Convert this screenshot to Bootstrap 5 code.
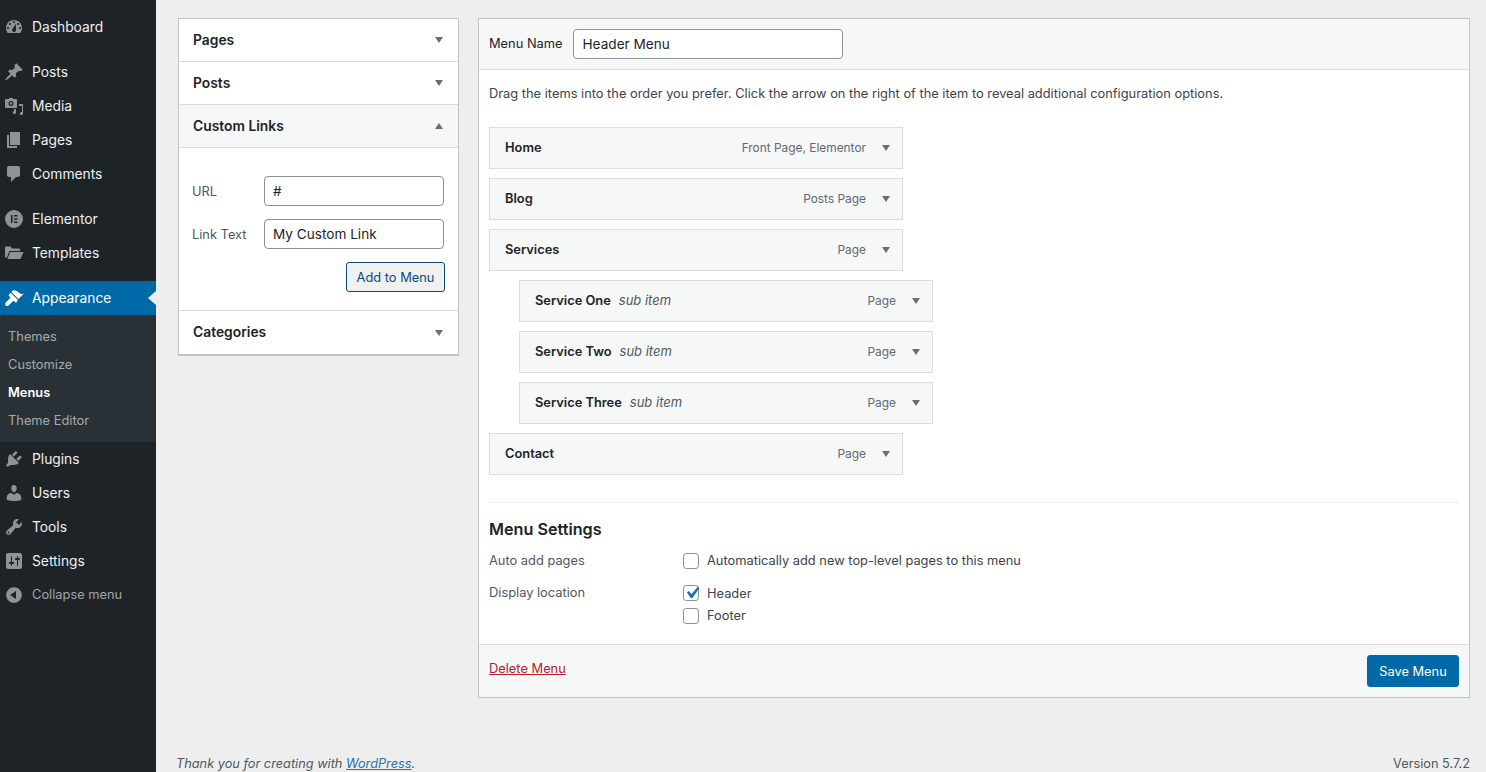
<!DOCTYPE html>
<html lang="en">
<head>
<meta charset="utf-8">
<title>Menus</title>
<link href="https://cdn.jsdelivr.net/npm/bootstrap@5.3.0/dist/css/bootstrap.min.css" rel="stylesheet">
<style>
html,body{height:100%;}
body{background:#eeeeee;font-family:Inter,"Liberation Sans",sans-serif;font-size:12.85px;color:#1d2327;overflow:hidden;}
.wp-shell{height:772px;}
.wp-side{width:156px;flex:none;background:#1d2327;padding-top:10px;}
.side-link{height:34px;padding-left:4px;color:#f0f0f1;font-size:13.8px;gap:8px;position:relative;}
.side-link svg{width:20px;height:20px;fill:#8f9297;flex:none;}
.side-gap{margin-top:11px;}
.side-link.on{background:#006aa8;color:#fff;}
.side-link.on svg{fill:#fff;}
.side-link.on::after{content:"";position:absolute;right:0;top:10px;border-top:7px solid transparent;border-bottom:7px solid transparent;border-right:8px solid #eeeeee;}
.side-sub{background:#2a3136;padding:7px 0 8px;}
.side-sub div{height:28px;line-height:28px;padding-left:8px;padding-top:1px;color:#a7aaad;font-size:12.85px;}
.side-sub .cur{color:#fff;font-weight:600;}
.side-collapse{height:32px;padding-top:2px;color:#a2a5a8;font-size:12.85px;}
.wp-main{flex:1;min-width:0;padding:18px 16px 0 22px;position:relative;}
.left-panel{width:281px;flex:none;background:#fff;border:1px solid #c3c4c7;border-bottom-width:2px;align-self:flex-start;margin-right:19px;}
.acc-head{height:43px;padding:0 15px 0 14px;font-size:13.85px;font-weight:600;border-bottom:1px solid #dcdcde;}
.acc-head.last{border-bottom:0;height:43px;}
.acc-head.open{background:#f6f7f7;}
.tri{width:0;height:0;border-left:4px solid transparent;border-right:4px solid transparent;border-top:6px solid #6a6f74;flex:none;}
.tri.up{border-top:0;border-bottom:6px solid #6a6f74;}
.acc-body{padding:28px 14px 14px 13px;border-bottom:1px solid #dcdcde;height:163px;}
.fld-label{width:72px;color:#50575e;flex:none;padding-top:2px;}
.fld-row{margin-bottom:13px;}
.wp-input{height:30px;width:180px;border:1px solid #8c8f94;border-radius:4px;padding:0 8px;font-size:13.6px;color:#1d2327;box-shadow:none;}
.btn-add{height:30px;width:99px;margin-left:auto;margin-right:-1px;display:block;padding:1px 0 0;background:#f0f0f1;border:1px solid #0a4b78;border-radius:3px;color:#0a4b78;font-size:12.85px;}
.right-panel{width:992px;height:680px;background:#fff;border:1px solid #c3c4c7;flex:none;}
.rp-head{height:51px;background:#f6f7f7;border-bottom:1px solid #dcdcde;padding:0 10px;gap:10px;}
.rp-head .wp-input{width:270px;padding-left:9px;}
.rp-body{padding:0 10px;height:574px;flex:none;}
.hint{padding-top:16px;height:57px;margin:0;color:#3c434a;line-height:16px;}
.menu-item-row{width:414px;height:42px;background:#f6f7f7;border:1px solid #dcdcde;margin-bottom:9px;padding:0 12px 0 15px;}
.menu-item-row.sub{margin-left:30px;}
.mi-name{font-weight:600;}
.mi-sub{font-style:italic;color:#50575e;margin-left:8px;font-size:13px;}
.mi-type{margin-left:auto;margin-right:16px;font-size:11.9px;color:#646970;}
.settings{border-top:1px solid #f0f0f1;margin-top:27px;padding-top:15px;}
.settings h3{font-size:16.2px;font-weight:600;margin:0 0 13px;line-height:22px;}
.set-label{width:194px;color:#50575e;flex:none;line-height:16px;}
.chk{width:16px;height:16px;margin:0 8px 0 0;border:1px solid #8c8f94;border-radius:4px;flex:none;}
.chk:checked{background-color:#fff;border-color:#8c8f94;background-image:none;}
.chk-wrap{position:relative;flex:none;width:24px;height:16px;}
.chk-wrap svg{position:absolute;left:-3px;top:-4px;width:24px;height:24px;fill:#1f6fb0;pointer-events:none;}
.set-val{line-height:16px;color:#3c434a;}
.loc-first{margin-bottom:6px;margin-top:1px;}
.loc-first .chk-wrap{margin-top:-1px;}
.rp-foot{height:53px;background:#f6f7f7;border-top:1px solid #dcdcde;padding:0 10px;}
.del{color:#b5202c;text-decoration:underline;margin-top:-5px;}
.btn-save{width:92px;height:32px;padding:2px 0 0;background:#006aa8;border:1px solid #006aa8;border-radius:3px;color:#fff;font-size:12.85px;}
.wp-foot{position:absolute;left:20px;right:16px;top:756px;line-height:16px;color:#50575e;font-size:12.75px;}
.wp-foot a{color:#2271b1;}
</style>
</head>
<body>
<div class="wp-shell d-flex">
  <nav class="wp-side">
    <div class="side-link d-flex align-items-center"><svg viewBox="0 0 20 20"><path fill-rule="evenodd" d="M3.76 16h12.48c1.1-1.37 1.76-3.11 1.76-5 0-4.42-3.58-8-8-8s-8 3.58-8 8c0 1.89.66 3.63 1.76 5zM10 4c.55 0 1 .45 1 1s-.45 1-1 1-1-.45-1-1 .45-1 1-1zM6 6c.55 0 1 .45 1 1s-.45 1-1 1-1-.45-1-1 .45-1 1-1zm8 0c.55 0 1 .45 1 1s-.45 1-1 1-1-.45-1-1 .45-1 1-1zm-5.37 5.55L12 7v6c0 1.1-.9 2-2 2s-2-.9-2-2c0-.57.24-1.08.63-1.45zM4 10c.55 0 1 .45 1 1s-.45 1-1 1-1-.45-1-1 .45-1 1-1zm12 0c.55 0 1 .45 1 1s-.45 1-1 1-1-.45-1-1 .45-1 1-1z"/></svg>Dashboard</div>
    <div class="side-link side-gap d-flex align-items-center"><svg viewBox="0 0 20 20"><path d="M10.44 3.02l1.82-1.82 6.36 6.35-1.83 1.82c-1.05-.68-2.48-.57-3.41.36l-.75.75c-.92.93-1.04 2.35-.35 3.41l-1.83 1.82-2.41-2.41-2.8 2.79c-.42.42-3.38 2.71-3.8 2.29s1.86-3.39 2.28-3.81l2.79-2.79L4.1 9.36l1.83-1.82c1.05.69 2.48.57 3.4-.36l.75-.75c.93-.92 1.05-2.35.36-3.41z"/></svg>Posts</div>
    <div class="side-link d-flex align-items-center"><svg viewBox="0 0 20 20"><path fill-rule="evenodd" d="M5 2h4v1h3c.55 0 1 .45 1 1v7c0 .55-.45 1-1 1H2c-.55 0-1-.45-1-1V4c0-.55.45-1 1-1h3V2zm2 3a2.500 2.500 0 1 0 0 5 2.500 2.500 0 0 0 0-5zm0 1.300a1.200 1.200 0 1 1 0 2.400 1.200 1.200 0 0 1 0-2.400zM15 8h4v9.500c0 1-.9 1.500-1.600 1.500s-1.600-.5-1.600-1.500.9-1.500 1.600-1.500c.2 0 .4 0 .6.1V10h-3V8zM9 13h3v3.600c0 1-.9 1.500-1.600 1.500s-1.600-.5-1.600-1.500.6-1.400 1.200-1.500V13z"/></svg>Media</div>
    <div class="side-link d-flex align-items-center"><svg viewBox="0 0 20 20"><path d="M6 15V2h10v13H6zm-1 1h8v2H3V5h2v11z"/></svg>Pages</div>
    <div class="side-link d-flex align-items-center"><svg viewBox="0 0 20 20"><path d="M5 2h9c1.1 0 2 .9 2 2v7c0 1.1-.9 2-2 2h-2l-5 5v-5H5c-1.1 0-2-.9-2-2V4c0-1.1.9-2 2-2z"/></svg>Comments</div>
    <div class="side-link side-gap d-flex align-items-center"><svg viewBox="0 0 20 20"><path fill-rule="evenodd" d="M10 1a9 9 0 1 0 0 18 9 9 0 0 0 0-18zM7 6h1.500v8H7V6zm3 0h3.500v1.500H10V6zm0 3.200h3.500v1.500H10V9.200zm0 3.300h3.500V14H10v-1.500z"/></svg>Elementor</div>
    <div class="side-link d-flex align-items-center"><svg viewBox="0 0 20 20"><path d="M1 4.500c0-.6.4-1 1-1h4.500l1.500 2h7c.6 0 1 .4 1 1V8H5.500L2.800 14.500H2c-.6 0-1-.4-1-1v-9zM6.300 9H19.500l-3 7H3.300l3-7z"/></svg>Templates</div>
    <div class="side-link side-gap on d-flex align-items-center"><svg viewBox="0 0 20 20"><path d="M14.480 11.060L7.410 3.990l1.500-1.500c.5-.56 2.300-.47 3.510.32 1.210.8 1.430 1.280 2.910 2.100 1.180.64 2.450 1.260 4.450.85zm-.71.71L6.700 4.700 4.930 6.470c-.39.39-.39 1.020 0 1.410l1.060 1.060c.39.39.39 1.020 0 1.410l-4.240 4.240c-.78.78-.78 2.050 0 2.830.78.78 2.050.78 2.830 0l4.240-4.240c.39-.39 1.020-.39 1.410 0l1.060 1.060c.39.39 1.020.39 1.410 0z"/></svg>Appearance</div>
    <div class="side-sub">
      <div>Themes</div>
      <div>Customize</div>
      <div class="cur">Menus</div>
      <div>Theme Editor</div>
    </div>
    <div class="side-link d-flex align-items-center"><svg viewBox="0 0 20 20"><path d="M13.110 4.360L9.870 7.600 8 5.730l3.240-3.240c.35-.34 1.050-.2 1.560.32.520.51.660 1.210.310 1.550zm-8 1.770l.91-1.120 9.010 9.010-1.190.84c-.71.71-2.630 1.160-3.820 1.160H6.140L4.900 17.260c-.59.59-1.540.59-2.120 0-.59-.58-.59-1.530 0-2.120l1.240-1.240v-3.880c0-1.130.4-3.190 1.090-3.890zm7.260 3.970l3.240-3.240c.34-.35 1.040-.21 1.550.31.520.51.660 1.210.310 1.550l-3.240 3.250z"/></svg>Plugins</div>
    <div class="side-link d-flex align-items-center"><svg viewBox="0 0 20 20"><path d="M10 9.250c-2.270 0-2.730-3.440-2.730-3.440C7 4.020 7.820 2 9.970 2c2.160 0 2.980 2.020 2.710 3.810 0 0-.41 3.440-2.680 3.440zm0 2.570L12.720 10c2.390 0 4.520 2.330 4.520 4.530v2.490s-3.650 1.130-7.240 1.130c-3.650 0-7.240-1.130-7.240-1.130v-2.490c0-2.250 1.940-4.480 4.470-4.480z"/></svg>Users</div>
    <div class="side-link d-flex align-items-center"><svg viewBox="0 0 20 20"><path fill-rule="evenodd" d="M16.680 9.770c-1.340 1.340-3.300 1.670-4.950.99l-5.410 6.520c-.99.99-2.590.99-3.580 0s-.99-2.590 0-3.570l6.520-5.420c-.68-1.650-.35-3.610.99-4.950 1.280-1.280 3.120-1.620 4.720-1.060l-2.890 2.890 2.820 2.820 2.860-2.870c.53 1.580.18 3.390-1.080 4.650zM3.810 16.210c.4.39 1.040.39 1.430 0 .4-.4.4-1.040 0-1.430-.39-.4-1.030-.4-1.430 0-.39.39-.39 1.030 0 1.430z"/></svg>Tools</div>
    <div class="side-link d-flex align-items-center"><svg viewBox="0 0 20 20"><path fill-rule="evenodd" d="M18 16V4c0-1.100-.9-2-2-2H4c-1.100 0-2 .9-2 2v12c0 1.100.9 2 2 2h12c1.100 0 2-.9 2-2zM8 11h1c.55 0 1 .45 1 1s-.45 1-1 1H8v1.500c0 .28-.22.5-.5.5s-.5-.22-.5-.5V13H6c-.55 0-1-.45-1-1s.45-1 1-1h1V5.500c0-.28.22-.5.5-.5s.5.22.5.5V11zm5-2h-1c-.55 0-1-.45-1-1s.45-1 1-1h1V5.500c0-.28.22-.5.5-.5s.5.22.5.5V7h1c.55 0 1 .45 1 1s-.45 1-1 1h-1v5.500c0 .28-.22.5-.5.5s-.5-.22-.5-.5V9z"/></svg>Settings</div>
    <div class="side-link side-collapse d-flex align-items-center"><svg viewBox="0 0 20 20"><path fill-rule="evenodd" d="M10 2.160c4.330 0 7.840 3.510 7.840 7.840s-3.510 7.840-7.840 7.840S2.160 14.330 2.160 10 5.710 2.160 10 2.160zm2 11.720V6.120L6.180 9.970z"/></svg>Collapse menu</div>
  </nav>
  <main class="wp-main d-flex align-items-start">
    <section class="left-panel">
      <div class="acc-head d-flex align-items-center justify-content-between">Pages<span class="tri"></span></div>
      <div class="acc-head d-flex align-items-center justify-content-between">Posts<span class="tri"></span></div>
      <div class="acc-head open d-flex align-items-center justify-content-between">Custom Links<span class="tri up"></span></div>
      <div class="acc-body">
        <div class="fld-row d-flex align-items-center"><label class="fld-label">URL</label><input class="form-control wp-input" value="#"></div>
        <div class="fld-row d-flex align-items-center"><label class="fld-label">Link Text</label><input class="form-control wp-input" value="My Custom Link"></div>
        <button class="btn btn-add">Add to Menu</button>
      </div>
      <div class="acc-head last d-flex align-items-center justify-content-between">Categories<span class="tri"></span></div>
    </section>
    <section class="right-panel d-flex flex-column">
      <div class="rp-head d-flex align-items-center"><label>Menu Name</label><input class="form-control wp-input" value="Header Menu"></div>
      <div class="rp-body">
        <p class="hint">Drag the items into the order you prefer. Click the arrow on the right of the item to reveal additional configuration options.</p>
        <div class="menu-item-row d-flex align-items-center"><span class="mi-name">Home</span><span class="mi-type">Front Page, Elementor</span><span class="tri"></span></div>
        <div class="menu-item-row d-flex align-items-center"><span class="mi-name">Blog</span><span class="mi-type">Posts Page</span><span class="tri"></span></div>
        <div class="menu-item-row d-flex align-items-center"><span class="mi-name">Services</span><span class="mi-type">Page</span><span class="tri"></span></div>
        <div class="menu-item-row sub d-flex align-items-center"><span class="mi-name">Service One</span><span class="mi-sub">sub item</span><span class="mi-type">Page</span><span class="tri"></span></div>
        <div class="menu-item-row sub d-flex align-items-center"><span class="mi-name">Service Two</span><span class="mi-sub">sub item</span><span class="mi-type">Page</span><span class="tri"></span></div>
        <div class="menu-item-row sub d-flex align-items-center"><span class="mi-name">Service Three</span><span class="mi-sub">sub item</span><span class="mi-type">Page</span><span class="tri"></span></div>
        <div class="menu-item-row d-flex align-items-center"><span class="mi-name">Contact</span><span class="mi-type">Page</span><span class="tri"></span></div>
        <div class="settings">
          <h3>Menu Settings</h3>
          <div class="d-flex mb-3"><div class="set-label">Auto add pages</div><div class="d-flex set-val"><span class="chk-wrap"><input type="checkbox" class="form-check-input chk"></span>Automatically add new top-level pages to this menu</div></div>
          <div class="d-flex"><div class="set-label">Display location</div>
            <div class="set-val">
              <div class="d-flex loc-first"><span class="chk-wrap"><input type="checkbox" class="form-check-input chk" checked><svg viewBox="0 0 20 20"><path d="M14.830 4.890l1.340.94-5.810 8.380H9.020L5.780 9.670l1.340-1.250 2.570 2.400z"/></svg></span>Header</div>
              <div class="d-flex"><span class="chk-wrap"><input type="checkbox" class="form-check-input chk"></span>Footer</div>
            </div>
          </div>
        </div>
      </div>
      <div class="rp-foot d-flex align-items-center justify-content-between"><a href="#" class="del">Delete Menu</a><button class="btn btn-save">Save Menu</button></div>
    </section>
    <footer class="wp-foot d-flex justify-content-between"><span class="fst-italic">Thank you for creating with <a href="#">WordPress</a>.</span><span>Version 5.7.2</span></footer>
  </main>
</div>
<script src="https://cdn.jsdelivr.net/npm/bootstrap@5.3.0/dist/js/bootstrap.bundle.min.js"></script>
</body>
</html>
